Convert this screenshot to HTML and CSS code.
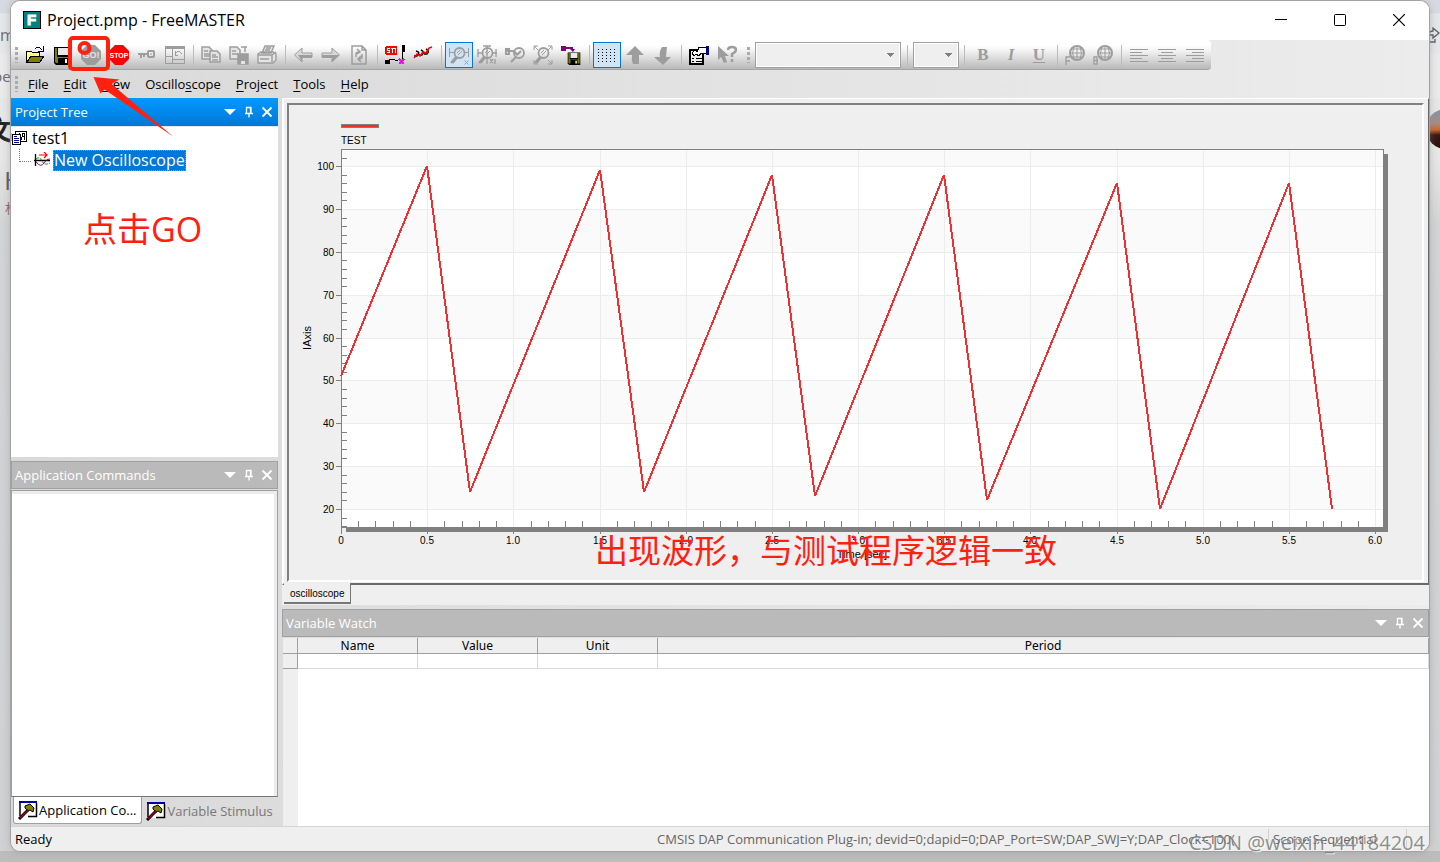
FILE: index.html
```html
<!DOCTYPE html>
<html lang="en">
<head>
<meta charset="utf-8">
<title>Project.pmp - FreeMASTER</title>
<link rel="stylesheet" href="styles.css">
</head>
<body>
<svg class="defs" aria-hidden="true">
  <symbol id="caret" viewBox="0 0 12 6"><path d="M0 0h12L6 6z" fill="#fff"/></symbol>
  <symbol id="pin" viewBox="0 0 10 12"><path d="M2.500 7V1.500H7V7M1 7.500h8M5 8v3.500M6.500 2v5" fill="none" stroke="#fff" stroke-width="1.300"/></symbol>
  <symbol id="cross" viewBox="0 0 12 12"><path d="M1.500 1.500l9 9M10.500 1.500l-9 9" stroke="#fff" stroke-width="1.800"/></symbol>
  <symbol id="lens" viewBox="0 0 20 20"><circle cx="10.500" cy="8" r="5" fill="none" stroke="currentColor" stroke-width="1.800"/><path d="M7 12l-5 6M8.500 12l-5 6" stroke="currentColor" stroke-width="2"/><path d="M8 8l3-3M9 10l4-4" stroke="currentColor"/></symbol>
  <symbol id="globe" viewBox="0 0 20 20"><circle cx="12" cy="8" r="7" fill="none" stroke="currentColor" stroke-width="2"/><path d="M12 1v14M5 8h14M7 4h10M7 12h10M9 2q-3 6 0 12M15 2q3 6 0 12" fill="none" stroke="currentColor"/></symbol>
  <symbol id="floppy" viewBox="0 0 20 20"><path d="M1 2h18v18H3l-2-2z" fill="#000"/><path d="M2 3h2v9h12V3h2v15h-3v-5H5v5H3l-1-1z" fill="#808000"/><path d="M5 3h10v7H5z" fill="#e8e8e8"/><path d="M12 14h2v4h-2z" fill="#fff"/></symbol>
  <symbol id="hammer" viewBox="0 0 20 20"><path d="M2 1h17v16H2z" fill="#fff"/><path d="M2 16V3M18.500 3v13.500H10" fill="none" stroke="#000" stroke-width="1.500"/><path d="M1 1h18v2H1z" fill="#00009c"/><path d="M7 6l5-2 4 4-1 4-3-2-2 1-3-3z" fill="#808000" stroke="#000"/><path d="M1 19l9-9" stroke="#000" stroke-width="3"/><path d="M2 18l8-8" stroke="#a00020" stroke-width="1.500"/></symbol>
</svg>

<div class="backdrop" aria-hidden="true">
  <span class="scrap scrap-m">m</span><span class="scrap scrap-pe">pe</span><span class="scrap scrap-wen">文</span><span class="scrap scrap-h">H</span><span class="scrap scrap-mu">杉</span>
  <svg class="share" viewBox="0 0 12 18"><path d="M0 8q1-4 5-4V1l6 5-6 5V8H0M0 15h7v-3" fill="none" stroke="#5c5f66" stroke-width="1.300"/></svg>
  <span class="avatar"></span>
</div>

<main class="window">
  <header class="titlebar">
    <svg class="app-icon" viewBox="0 0 18 18"><path fill="#000" d="M0 0h18v18H0z"/><path fill="#008080" d="M1 1h16v16H1z"/><text x="4" y="14" class="app-letter">F</text></svg>
    <h1>Project.pmp - FreeMASTER</h1>
    <button class="win-btn" aria-label="Minimize"><svg viewBox="0 0 12 12"><path d="M0 5.500h12" stroke="#000"/></svg></button>
    <button class="win-btn" aria-label="Maximize"><svg viewBox="0 0 12 12"><rect x=".5" y=".5" width="11" height="11" rx="1" fill="none" stroke="#000"/></svg></button>
    <button class="win-btn" aria-label="Close"><svg viewBox="0 0 12 12"><path d="M0 0l12 12M12 0L0 12" stroke="#000" stroke-width="1.200"/></svg></button>
  </header>

  <div class="tool-row">
  <div class="toolbar">
    <i class="grip"></i>
    <button aria-label="Open"><svg viewBox="0 0 20 20" shape-rendering="crispEdges"><path d="M1 17V6h5l1 1h7v4" fill="#ffff80" stroke="#000"/><path d="M2 17l4-6h13l-4 6z" fill="#808000" stroke="#000"/><path d="M10 4q4-4 7 1M18 1v5h-5" fill="none" stroke="#000"/></svg></button>
    <button aria-label="Save"><svg><use href="#floppy"/></svg></button>
    <button class="off" aria-label="Go"><svg viewBox="0 0 20 20"><path d="M6 0h8l6 6v8l-6 6H6l-6-6V6z" fill="currentColor"/><text x="10" y="13" text-anchor="middle" class="sign" fill="#e4e4e4">GO!</text></svg></button>
    <button aria-label="Stop"><svg viewBox="0 0 20 20"><path d="M6 0h8l6 6v8l-6 6H6l-6-6V6z" fill="#f00"/><text x="10" y="13" text-anchor="middle" class="sign stop" fill="#fff">STOP</text></svg></button>
    <button class="off" aria-label="Key"><svg viewBox="0 0 20 20" fill="none" stroke="currentColor" stroke-width="2"><path d="M1 9h11M4 9v4M7 9v3"/><rect x="11" y="6" width="6" height="6" rx="1"/><path d="M14 8v2" stroke-width="1"/></svg></button>
    <button class="off" aria-label="Layout"><svg viewBox="0 0 20 20" fill="none" stroke="currentColor" shape-rendering="crispEdges"><rect x=".5" y="1.500" width="19" height="17"/><path d="M1 3h18" stroke-width="2"/><path d="M7 3v15M0 11h7M7 14h12M10 9q3-5 7 0M10 6v4h3"/></svg></button>
    <i class="sep"></i>
    <button class="off" aria-label="Copy"><svg viewBox="0 0 20 20" fill="#e4e4e4" stroke="currentColor" stroke-width="1.500"><path d="M1 2h7l3 3v9H1z"/><path d="M3 6h4M3 9h6M3 11h6"/><path d="M9 6h7l3 3v8H9z"/><path d="M11 10h4M11 12h6M11 15h6"/></svg></button>
    <button class="off" aria-label="Copy and save"><svg viewBox="0 0 20 20" fill="#e4e4e4" stroke="currentColor" stroke-width="1.500"><path d="M1 2h7l3 3v9H1z"/><path d="M3 6h4M3 9h6"/><path d="M9 9h10v10H9z" fill="currentColor"/><path d="M12 16h4v3h-4z" stroke="none"/><path d="M12 2h6M16 2v5" fill="none"/></svg></button>
    <button class="off" aria-label="Print"><svg viewBox="0 0 20 20" fill="#e4e4e4" stroke="currentColor" stroke-width="1.400"><path d="M5 8l3-7h9l-3 7zM1 9l3-2h12l3 2v6l-3 3H1zM1 10h14v7M15 10l4-3M3 14h9M9 3h5M8 5h5"/></svg></button>
    <i class="sep"></i>
    <button class="off" aria-label="Back"><svg viewBox="0 0 20 20"><path d="M1.500 10L9 3v5h10v4H9v5z" fill="#d8d8d8" stroke="currentColor"/><path d="M5 10h14v3H9v4z" fill="currentColor"/></svg></button>
    <button class="off" aria-label="Forward"><svg viewBox="0 0 20 20"><path d="M18.500 10L11 3v5H1v4h10v5z" fill="#d8d8d8" stroke="currentColor"/><path d="M1 10h17l-7 7v-4H1z" fill="currentColor"/></svg></button>
    <button class="off" aria-label="Refresh"><svg viewBox="0 0 20 20" fill="none" stroke="currentColor" stroke-width="1.500"><path d="M3 1h10l4 4v14H3zM13 1v4h4M7 12V9q0-2 3-2M8 4l3 3-3 2M13 9v3q0 2-3 2M12 11l-3 3 3 3"/></svg></button>
    <i class="sep"></i>
    <button aria-label="Stop recorder"><svg viewBox="0 0 20 20" shape-rendering="crispEdges"><path d="M1 1h10l1 1v7l-1 1H1L0 9V2z" fill="#f00"/><path d="M5 3H2v2h2v2H2M6 3.500h4M7.500 3v5M10 8V3" stroke="#fff" fill="none"/><path d="M17 0h3v7h-2v7h-1z" fill="#000"/><path d="M0 15h4v3H0zM4 15q3-2 6 0h3" fill="#000" stroke="#000"/><path d="M14 14l5 5M19 14l-5 5" stroke="#f0f" stroke-width="1.500"/></svg></button>
    <button aria-label="Waves"><svg viewBox="0 0 20 20" fill="none" stroke="#000" stroke-width="1.500"><path d="M3 6q5 1 1 5H1M8 5q4 2 1 5H6M13 4q4 2 1 5h-3"/><path d="M1 13L4 9l3 2 3-4 3 1 3-5 3-1" stroke="#f00" stroke-width="1.500"/></svg></button>
    <i class="sep"></i>
    <button class="off picked" aria-label="Zoom X"><svg viewBox="0 0 20 20"><use href="#lens" width="20" height="20"/><path d="M.5 3v9M19.500 3v9M0 7.500h5M15 7.500h4M15.500 15.500l4 4M19.500 15.500l-4 4" stroke="currentColor"/></svg></button>
    <button class="off" aria-label="Zoom XY"><svg viewBox="0 0 20 20"><use href="#lens" width="20" height="20"/><path d="M1 4v8M19 4v8M1 8h4M15 8h5M6 1h8M10 1v18M13 14l3 4M16 14l-3 4M18 14v5" stroke="currentColor" stroke-width="1.300"/></svg></button>
    <button class="off" aria-label="Undo zoom"><svg viewBox="0 0 20 20"><circle cx="14" cy="8" r="5" fill="none" stroke="currentColor" stroke-width="1.800"/><path d="M12 10l4-4M11 12l-5 5M1 6h6q3 0 5 4M0 4h4v5H1z" fill="none" stroke="currentColor" stroke-width="2"/></svg></button>
    <button class="off" aria-label="Zoom all"><svg viewBox="0 0 20 20"><use href="#lens" width="20" height="20"/><path d="M1 5V1h4M1 1l4 4M15 1h4v4M19 1l-4 4M1 15v4h4M15 19h4v-4M19 19l-4-4" fill="none" stroke="currentColor"/></svg></button>
    <button aria-label="Export"><svg viewBox="0 0 20 20"><path d="M0 1h5v5H0zM5 2h7v2h2l-2 3-3-3H5z" fill="#800080"/><use href="#floppy" x="6" y="6" width="14" height="14"/></svg></button>
    <i class="sep"></i>
    <button class="picked" aria-label="Grid"><svg viewBox="0 0 20 20"><path d="M1.500 4v13M5.500 4v13M9.500 4v13M13.500 4v13M17.500 4v13" stroke="#000" stroke-dasharray="1 2" shape-rendering="crispEdges"/></svg></button>
    <button class="off" aria-label="Up"><svg viewBox="0 0 20 20"><path d="M10 1l9 9h-5v9H8q-2-4-1-9H1z" fill="currentColor"/></svg></button>
    <button class="off" aria-label="Down"><svg viewBox="0 0 20 20"><path d="M10 20l-9-8h6q-1-6 2-10h5l-1 10h5z" fill="currentColor"/></svg></button>
    <i class="sep"></i>
    <button aria-label="Properties"><svg viewBox="0 0 20 20" shape-rendering="crispEdges"><path d="M1 5h13v14H1z" fill="#eee" stroke="#000" stroke-width="1.500"/><path d="M3 13h2M7 13h6M3 16h2M7 16h6" stroke="#000"/><path d="M3 8l3-3 2 2 2-5h8v6h-6l-2 3-3-2-2 2z" fill="#fff" stroke="#000"/><path d="M17 1h3v9h-3z" fill="#00008b"/></svg></button>
    <button class="off" aria-label="Context help"><svg viewBox="0 0 20 20"><path d="M1 1v14l3-3 3 6 3-1-2-6h4z" fill="currentColor"/><path d="M11 5q0-3 4-3t4 3q0 2-4 4v3M15 14v3" fill="none" stroke="currentColor" stroke-width="2.500"/></svg></button>
    <i class="grip second"></i>
    <select class="combo wide" aria-label="Font"><option></option></select>
    <i class="sep loose"></i>
    <select class="combo" aria-label="Size"><option></option></select>
    <i class="sep loose"></i>
    <button class="off fmt" aria-label="Bold"><b>B</b></button>
    <button class="off fmt" aria-label="Italic"><em>I</em></button>
    <button class="off fmt" aria-label="Underline"><u>U</u></button>
    <i class="sep"></i>
    <button class="off" aria-label="Foreground"><svg viewBox="0 0 20 20"><use href="#globe" width="20" height="20"/><path d="M1 20v-8h4M1 16h4" fill="none" stroke="currentColor" stroke-width="1.300"/></svg></button>
    <button class="off" aria-label="Background"><svg viewBox="0 0 20 20"><use href="#globe" width="20" height="20"/><path d="M1 12h3v7H1zM1 15.500h4" fill="#d8d8d8" stroke="currentColor" stroke-width="1.300"/></svg></button>
    <i class="sep"></i>
    <button class="off" aria-label="Align left"><svg viewBox="0 0 20 20"><path d="M1 4.500h18M1 7.500h12M1 10.500h18M1 13.500h12M1 16.500h18" stroke="currentColor"/></svg></button>
    <button class="off" aria-label="Align center"><svg viewBox="0 0 20 20"><path d="M1 4.500h18M4 7.500h12M1 10.500h18M4 13.500h12M1 16.500h18" stroke="currentColor"/></svg></button>
    <button class="off" aria-label="Align right"><svg viewBox="0 0 20 20"><path d="M1 4.500h18M7 7.500h12M1 10.500h18M7 13.500h12M1 16.500h18" stroke="currentColor"/></svg></button>
  </div>
  </div>

  <nav class="menubar">
    <i class="grip"></i>
    <button><u>F</u>ile</button><button><u>E</u>dit</button><button><u>V</u>iew</button><button>Oscillo<u>s</u>cope</button><button><u>P</u>roject</button><button><u>T</u>ools</button><button><u>H</u>elp</button>
  </nav>

  <div class="work">
    <aside class="side">
      <section class="tree-pane">
        <header class="pane-head active"><h2>Project Tree</h2><button class="pane-btn" aria-label="Menu"><svg class="caret"><use href="#caret"/></svg></button><button class="pane-btn" aria-label="Pin"><svg class="pin"><use href="#pin"/></svg></button><button class="pane-btn" aria-label="Close"><svg class="cross"><use href="#cross"/></svg></button></header>
        <ul class="tree">
          <li><svg viewBox="0 0 16 16" shape-rendering="crispEdges"><path d="M4 1h11v10H4z" fill="#fff" stroke="#000"/><path d="M8 3v3M11 3h2v3h-2zM8 7h2v3M13 7v3" fill="none" stroke="#000"/><path d="M1 4h8v10H1z" fill="#fff" stroke="#000"/><path d="M0 3v8" stroke="#dd0"/><path d="M3 6h3M3 8h5M3 10h5M3 12h5" stroke="#000090"/></svg><span>test1</span></li>
          <li class="child"><svg viewBox="0 0 16 16"><path d="M1.500 2v12M0 8.500h16" stroke="#000" stroke-width="1.300"/><path d="M5 3h8M10 0l3 3-3 3" fill="none" stroke="#f00" stroke-width="1.200"/><path d="M2 7q4-3 6 2t8 2" fill="none" stroke="#090" stroke-dasharray="3 1"/><path d="M2 10q5 6 8 1t6-4" fill="none" stroke="#909"/></svg><span class="chosen">New Oscilloscope</span></li>
        </ul>
      </section>
      <section class="cmd-pane">
        <header class="pane-head"><h2>Application Commands</h2><button class="pane-btn" aria-label="Menu"><svg class="caret"><use href="#caret"/></svg></button><button class="pane-btn" aria-label="Pin"><svg class="pin"><use href="#pin"/></svg></button><button class="pane-btn" aria-label="Close"><svg class="cross"><use href="#cross"/></svg></button></header>
        <div class="cmd-list"></div>
        <div class="cmd-tabs"><button class="current"><svg><use href="#hammer"/></svg>Application Co...</button><button><svg><use href="#hammer"/></svg>Variable Stimulus</button></div>
      </section>
    </aside>

    <div class="center">
      <section class="doc">
        <div class="doc-frame"><div class="graph"><svg id="chart" role="img" aria-label="TEST"></svg></div></div>
        <div class="doc-tabs"><button>oscilloscope</button></div>
      </section>
      <section class="watch">
        <header class="pane-head"><h2>Variable Watch</h2><button class="pane-btn" aria-label="Menu"><svg class="caret"><use href="#caret"/></svg></button><button class="pane-btn" aria-label="Pin"><svg class="pin"><use href="#pin"/></svg></button><button class="pane-btn" aria-label="Close"><svg class="cross"><use href="#cross"/></svg></button></header>
        <div class="watch-body">
          <table><thead><tr><th class="stub"></th><th class="col">Name</th><th class="col">Value</th><th class="col">Unit</th><th>Period</th></tr></thead>
          <tbody><tr><th class="stub"></th><td></td><td></td><td></td><td></td></tr></tbody></table>
        </div>
      </section>
    </div>
  </div>

  <footer class="status"><span>Ready</span><span class="link">CMSIS DAP Communication Plug-in; devid=0;dapid=0;DAP_Port=SW;DAP_SWJ=Y;DAP_Clock=100(</span><span class="scope">Scope Sequential</span><i class="size-grip"></i></footer>
</main>

<svg class="marks" aria-hidden="true">
  <rect x="70" y="38" width="38" height="31" rx="3" fill="none" stroke="#ff2010" stroke-width="4"/>
  <circle cx="84.500" cy="48" r="5" fill="none" stroke="#ff2010" stroke-width="4"/>
  <path d="M93.500 77l26 2.500-8 4.500L173 136.500 104.500 89.500l-4 4z" fill="#ff2010"/>
</svg>
<p class="note note-go">点击GO</p>
<p class="note note-wave">出现波形，与测试程序逻辑一致</p>
<p class="watermark">CSDN @weixin_44184204</p>
<script src="chart.js"></script>
</body>
</html>
```

FILE: styles.css
```css
* { box-sizing: border-box; }
html, body { height: 100%; margin: 0; }
body {
  display: flex;
  padding: 1px 11px 11px;
  overflow: hidden;
  font: 13px/20px "Open Sans", "Noto Sans CJK SC", sans-serif;
  color: #000;
  background: linear-gradient(#bdbdbd, #bdbdbd) bottom / 100% 11px no-repeat, linear-gradient(#d9dbe2 0 13px, #e6e7ea 14px 53px, #ebebeb 54px 98px, #e8e8e8 99px 159px, #d3d4d5 225px, #d0d2d3 100%);
}
h1, h2, p, ul { margin: 0; padding: 0; font-weight: 400; }
button { font: inherit; color: inherit; background: none; border: 0; padding: 0; }
svg { display: block; }
.defs { position: absolute; width: 0; height: 0; }

.scrap { position: absolute; color: #6a6a72; white-space: nowrap; }
.scrap-m { left: 0; top: 25px; font-size: 16px; }
.scrap-pe { left: -7px; top: 66px; font-size: 15px; }
.scrap-wen { left: -14px; top: 120px; font-size: 26px; font-weight: 700; color: #222; }
.scrap-h { left: 4px; top: 170px; font-size: 26px; color: #555a66; }
.scrap-mu { left: 5px; top: 198px; font-size: 13px; color: #965f5f; }
.share { position: absolute; right: 0; top: 27px; width: 12px; height: 18px; }
.avatar { position: absolute; right: -26px; top: 109px; width: 40px; height: 40px; border-radius: 50%; background: linear-gradient(#8392a8, #a98d86 35%, #c9692c 52%, #3b1713 65%, #25100f); }

.window {
  position: relative;
  flex: 1;
  min-width: 0;
  display: flex;
  flex-direction: column;
  overflow: hidden;
  border-radius: 9px;
  background: linear-gradient(90deg, #d9d9d9, #ececec);
  box-shadow: 0 0 0 1px #a2a2a2, 0 0 10px #8888;
}
.titlebar { display: flex; align-items: center; height: 39px; padding: 0 1px 1px 12px; background: #fff; }
.app-icon { width: 18px; height: 18px; }
.app-letter { font: 700 15px "Liberation Sans", sans-serif; fill: #fff; stroke: #fff; }
.titlebar h1 { flex: 1; margin-left: 6px; font-size: 16px; }
.win-btn { width: 59px; height: 36px; display: grid; place-items: center; }
.win-btn svg { width: 12px; height: 12px; }

.tool-row { height: 30px; display: flex; }
.toolbar { display: flex; align-items: center; height: 30px; padding: 0 2px 0 4px; background: linear-gradient(#fff 20%, #f0f0f0 40%, #b9b9b9); border-bottom: 1px solid #a5a5a5; border-radius: 0 4px 4px 0; }
.toolbar button { width: 28px; height: 26px; flex: none; display: grid; place-items: center; }
.toolbar svg { width: 20px; height: 20px; }
.toolbar .off { color: #9d9d9d; }
.toolbar .picked { background: #cfe4f5; border: 1px solid #0078d7; }
.sign { font: 700 9px "Liberation Sans", sans-serif; }
.sign.stop { font-size: 7px; }
.grip { width: 3px; height: 16px; margin-right: 3px; background: repeating-linear-gradient(#aaa 0 3px, transparent 3px 5px); }
.grip.second { margin: 0 5px 0 6px; }
.sep { width: 8px; height: 20px; background: linear-gradient(#bcbcbc, #bcbcbc) center / 1px 100% no-repeat; }
.sep.loose { width: 12px; }
.sep.loose ~ .sep.loose { width: 10px; }
.combo {
  appearance: none;
  flex: none;
  width: 46px;
  height: 26px;
  border: 1px solid #a0a0a0;
  border-radius: 0;
  outline: 1px solid #fff;
  outline-offset: -2px;
  background:
    linear-gradient(to top right, transparent 50%, #808080 50%) right 9px center / 4px 4px no-repeat,
    linear-gradient(to top left, transparent 50%, #808080 50%) right 5px center / 4px 4px no-repeat,
    #efefef;
}
.combo.wide { width: 146px; }
.fmt { font: 700 17px/20px "Liberation Serif", serif; }

.menubar { display: flex; align-items: center; height: 28px; padding-left: 4px; gap: 1px; }
.menubar .grip { margin-right: 2px; }
.menubar button { padding: 0 7px; }
u { text-underline-offset: 2px; text-decoration-thickness: 1px; }

.work { flex: 1; display: flex; gap: 4px; min-height: 0; }
.side { width: 267px; display: flex; flex-direction: column; gap: 4px; }
.tree-pane { flex: 360; display: flex; flex-direction: column; min-height: 0; }
.cmd-pane { flex: 364; display: flex; flex-direction: column; min-height: 0; padding-bottom: 2px; }
.pane-head { display: flex; align-items: center; height: 28px; flex: none; padding: 0 3px; background: #bababa; border: 1px solid #a0a0a0; color: #fff; }
.pane-head.active { border: 0; padding: 0 4px; background: linear-gradient(#0099ff, #0078d7); }
.pane-head h2 { flex: 1; font-size: 13px; }
.pane-btn { width: 19px; height: 20px; display: grid; place-items: center; }
.pane-btn:last-child { width: 14px; margin-left: 2px; }
.caret { width: 12px; height: 6px; }
.pin { width: 10px; height: 12px; }
.cross { width: 12px; height: 12px; }
.tree { flex: 1; background: #fff; list-style: none; border-top: 1px solid #e8e8e8; font-size: 16px; line-height: 21px; }
.tree li { display: flex; align-items: center; gap: 5px; height: 22px; }
.tree svg { width: 16px; height: 16px; }
.tree .child { gap: 3px; }
.tree .child::before { content: ""; width: 11px; height: 12px; margin: -10px 0 0 8px; border: dotted #777; border-width: 0 0 1px 1px; }
.chosen { padding: 0 1px; color: #fff; background: #0078d7; outline: 1px dotted #e08a30; outline-offset: -1px; }
.cmd-list { flex: 1; margin-top: 1px; background: #fff; border: 1px solid #a0a0a0; border-bottom-color: #777; box-shadow: inset -3px 3px #ececec; }
.cmd-tabs { display: flex; height: 27px; padding-left: 2px; color: #777; }
.cmd-tabs button { display: flex; align-items: center; padding: 0 4px; white-space: nowrap; }
.cmd-tabs .current { background: #fff; color: #000; border: 1px solid #a0a0a0; border-top: 0; border-radius: 0 0 3px 3px; padding: 0 5px 0 4px; }
.cmd-tabs svg { width: 20px; height: 20px; margin-right: 1px; }

.center { flex: 1; min-width: 0; display: flex; flex-direction: column; gap: 4px; }
.doc { flex: 507; min-height: 0; display: flex; flex-direction: column; background: #efefef; }
.doc-frame { flex: 1; min-height: 0; display: flex; padding: 4px 4px 1px 3px; border: solid; border-width: 1px 1px 2px 2px; border-color: #fff #696969 #696969 #fff; }
.graph { flex: 1; min-width: 0; border: 2px solid; border-color: #808080 #fff #fff #808080; }
#chart { width: 100%; height: 100%; font: 10px "Liberation Sans", Arial, sans-serif; shape-rendering: crispEdges; }
#chart .axis-name { font-size: 11px; }
.doc-tabs { display: flex; align-items: flex-start; height: 20px; padding-left: 2px; }
.doc-tabs button { height: 21px; margin-top: -2px; padding: 3px 6px 0; background: #efefef; border: solid #777; border-width: 0 1px 2px 0; font: 10px/14px "Liberation Sans", Arial, sans-serif; position: relative; }

.watch { flex: 217; min-height: 0; display: flex; flex-direction: column; }
.watch-body { flex: 1; margin: 1px 0 0 1px; background: linear-gradient(90deg, #efefef 15px, #fff 15px); }
table { width: 100%; table-layout: fixed; border-collapse: separate; border-spacing: 0; font-family: "Noto Sans", sans-serif; font-size: 12px; line-height: 14px; }
th { height: 16px; padding: 0; font-weight: 400; background: #efefef; border: solid; border-width: 0 1px 1px 0; border-color: #a0a0a0; }
td, tbody th { height: 15px; }
td { padding: 0; background: #fff; border: solid #d9d9d9; border-width: 0 1px 1px 0; }
.stub { width: 15px; }
.col { width: 120px; }

.status { height: 25px; flex: none; display: flex; align-items: center; padding: 0 5px 0 4px; background: #efefef; border-top: 1px solid #d4d4d4; }
.link { margin-left: auto; width: 612px; overflow: hidden; white-space: nowrap; color: #666; border-right: 1px solid #d0d0d0; }
.scope { width: 138px; padding-left: 4px; color: #666; border-right: 1px solid #d0d0d0; }
.size-grip { width: 17px; }

.marks { position: absolute; left: 0; top: 0; width: 180px; height: 140px; pointer-events: none; }
.note { position: absolute; color: #ff2010; font-size: 33px; line-height: 40px; white-space: nowrap; }
.note-go { left: 83px; top: 209px; font-size: 34px; }
.note-wave { left: 595px; top: 531px; }
.watermark { position: absolute; right: 15px; bottom: 6px; font: 20px/26px "Open Sans", sans-serif; color: #777; text-shadow: 1px 1px #fff; opacity: .8; }
```

FILE: chart.js
```js
const svg = document.getElementById('chart');
const samples = [[0, 51], [0.5, 100], [0.75, 24], [1.5, 99], [1.76, 24], [2.5, 98], [2.75, 23], [3.5, 98], [3.75, 22], [4.5, 96], [4.75, 20], [5.5, 96], [5.75, 20]];

function draw() {
  const { width, height } = svg.getBoundingClientRect();
  const left = 52, top = 44, right = Math.round(width) - 39, bottom = Math.round(height) - 53;
  const x = t => Math.round(left + t / 6.046 * (right - left));
  const y = v => Math.round(top + (104 - v) / 88.2 * (bottom - top));
  const rect = (a, b, w, h, fill) => `<rect x="${a}" y="${b}" width="${w}" height="${h}" fill="${fill}"/>`;
  let out = rect(left + 5, top + 5, right - left, bottom - top, '#808080');
  out += rect(left, top, right - left, bottom - top, '#fff');
  out += rect(left, top, right - left, y(100) - top, '#fafafa');
  for (let v = 90; v >= 30; v -= 20) out += rect(left, y(v), right - left, y(v - 10) - y(v), '#fafafa');
  for (let v = 20; v <= 100; v += 10) {
    out += rect(left, y(v), right - left, 1, '#ececec') + rect(left - 5, y(v), 5, 1, '#808080');
    out += `<text x="${left - 7}" y="${y(v) + 4}" text-anchor="end">${v}</text>`;
  }
  for (let v = 16; v <= 102; v += 2) if (v % 10) out += rect(left, y(v), 6, 1, '#808080');
  for (let i = 0; i <= 60; i++) {
    const px = x(i / 10);
    if (i % 5) { out += rect(px, bottom - 6, 1, 6, '#808080'); continue; }
    out += rect(px, top, 1, bottom - top, '#ececec') + rect(px, bottom, 1, 7, '#808080');
    out += `<text x="${px}" y="${bottom + 17}" text-anchor="middle">${i ? (i / 10).toFixed(1) : 0}</text>`;
  }
  out += `<rect x="${left + .5}" y="${top + .5}" width="${right - left}" height="${bottom - top}" fill="none" stroke="#808080"/>`;
  out += `<polyline points="${samples.map(([t, v]) => x(t) + ',' + y(v)).join(' ')}" fill="none" stroke="#f03030" stroke-width="2" stroke-linejoin="bevel"/>`;
  out += rect(left, 19, 38, 4, '#808080') + rect(left + 1, 20, 36, 2, '#f03030');
  out += `<text x="${left}" y="39">TEST</text>`;
  out += `<text class="axis-name" x="${(left + right) / 2}" y="${bottom + 31}" text-anchor="middle">Time [sec]</text>`;
  out += `<text class="axis-name" transform="rotate(-90 22 ${(top + bottom) / 2})" x="22" y="${(top + bottom) / 2}" text-anchor="middle">IAxis</text>`;
  svg.innerHTML = out;
}
draw();
addEventListener('resize', draw);
```
